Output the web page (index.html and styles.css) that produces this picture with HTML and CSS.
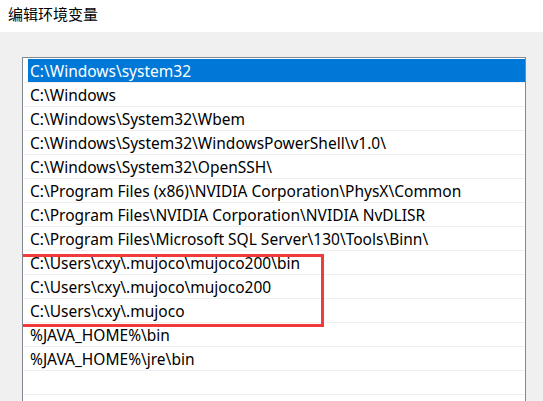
FILE: index.html
```html
<!DOCTYPE html>
<html lang="zh-CN">
<head>
    <meta charset="UTF-8">
    <title>编辑环境变量</title>
    <link rel="stylesheet" href="styles.css">
</head>
<body>
    <header class="title-bar">编辑环境变量</header>

    <main class="dialog-body">
        <div class="path-list">
            <ul>
                <li class="selected"><span>C:\Windows\system32</span></li>
                <li><span>C:\Windows</span></li>
                <li><span>C:\Windows\System32\Wbem</span></li>
                <li><span>C:\Windows\System32\WindowsPowerShell\v1.0\</span></li>
                <li><span>C:\Windows\System32\OpenSSH\</span></li>
                <li><span>C:\Program Files (x86)\NVIDIA Corporation\PhysX\Common</span></li>
                <li><span>C:\Program Files\NVIDIA Corporation\NVIDIA NvDLISR</span></li>
                <li><span>C:\Program Files\Microsoft SQL Server\130\Tools\Binn\</span></li>
                <li><span>C:\Users\cxy\.mujoco\mujoco200\bin</span></li>
                <li><span>C:\Users\cxy\.mujoco\mujoco200</span></li>
                <li><span>C:\Users\cxy\.mujoco</span></li>
                <li><span>%JAVA_HOME%\bin</span></li>
                <li><span>%JAVA_HOME%\jre\bin</span></li>
                <li><span></span></li>
            </ul>
            <!-- marks the mujoco entries -->
            <div class="mark"></div>
        </div>
    </main>
</body>
</html>
```

FILE: styles.css
```css
/* Global */
body {
    margin: 0;
    height: 401px;
    overflow: hidden;
    background-color: #f0f0f0;
    font-family: "Noto Sans", "Noto Sans CJK SC", sans-serif;
    color: #000;
}

/* Title */
.title-bar {
    height: 32px;
    box-sizing: border-box;
    padding: 4px 0 0 8px;
    background-color: #fff;
    font-family: "Noto Sans CJK SC", sans-serif;
    font-size: 15px;
    line-height: 20px;
}

/* Dialog */
.dialog-body {
    padding: 25px 0 0 22px;
}

/* Path list (bottom edge sits just below the window) */
.path-list {
    position: relative;
    width: 504px;
    height: 345px;
    box-sizing: border-box;
    border: 1px solid #828790;
    border-bottom-color: transparent;
    padding: 1px 0 0 1px;
    background-color: #fff;
    overflow: hidden;
}

.path-list ul {
    list-style: none;
    margin: 0;
    padding: 0;
}

.path-list li {
    height: 23px;
    border-bottom: 1px solid #efefef;
    padding-left: 4px;
}

.path-list li span {
    display: block;
    height: 23px;
    padding-left: 2px;
    font-size: 15.5px;
    line-height: 24px;
    white-space: nowrap;
}

.path-list li.selected span {
    background-color: #0078d7;
    color: #fff;
}

/* Red annotation box */
.mark {
    position: absolute;
    left: -3px;
    top: 196px;
    width: 304px;
    height: 73px;
    box-sizing: border-box;
    border: 3px solid #f03a3c;
}
```
